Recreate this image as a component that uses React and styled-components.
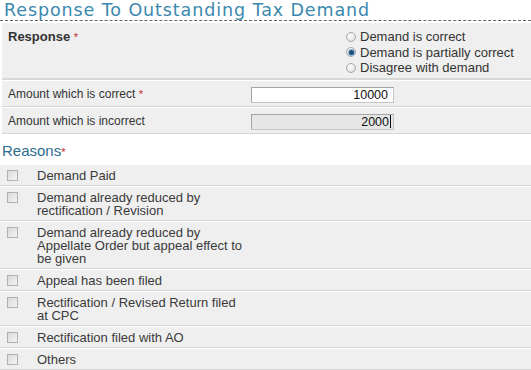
import React from "react";
import styled, { createGlobalStyle } from "styled-components";

const Global = createGlobalStyle`
  html, body { margin: 0; padding: 0; background: #fff; }
  body { font-family: "Liberation Sans", Arial, sans-serif; font-size: 13px; color: #333; }
  * { box-sizing: border-box; }
`;

const Page = styled.div`
  width: 531px;
  height: 370px;
  overflow: hidden;
`;

const Title = styled.h1`
  margin: 0;
  padding: 1px 0 0 4px;
  height: 21px;
  font-family: "DejaVu Sans", sans-serif;
  font-weight: normal;
  font-size: 17.5px;
  line-height: 19px;
  color: #3b88ad;
  letter-spacing: 0.9px;
  border-bottom: 1px dashed #666;
  white-space: nowrap;
`;

const ResponseBox = styled.div`
  margin: 2px 0 0 2px;
  height: 57px;
  background: #efefef;
  border-bottom: 2px solid #d8d8d8;
  display: grid;
  grid-template-columns: 344px 1fr;
`;

const FieldLabel = styled.div`
  padding: ${(p) => p.$pad || "7px 0 0 6px"};
  font-weight: ${(p) => (p.$bold ? "bold" : "normal")};
  font-size: ${(p) => (p.$bold ? "13px" : "12px")};
  color: #333;
`;

const Star = styled.span`
  color: #c0282e;
  font-weight: normal;
  font-size: 11px;
`;

const Options = styled.div`
  padding-top: 6px;
  display: flex;
  flex-direction: column;
`;

const Option = styled.label`
  display: flex;
  align-items: center;
  gap: 4px;
  height: 15.5px;
  font-size: 13px;
  color: #333;
`;

const Radio = styled.span`
  width: 10px;
  height: 10px;
  border-radius: 50%;
  border: 1px solid #a8a8a8;
  background: radial-gradient(circle at 40% 35%, #ffffff 0%, #e4e4e4 70%, #cfcfcf 100%);
  display: inline-flex;
  align-items: center;
  justify-content: center;
  flex: none;
  &::after {
    content: "";
    width: 5px;
    height: 5px;
    border-radius: 50%;
    background: ${(p) => (p.$on ? "#1d4f78" : "transparent")};
    box-shadow: ${(p) => (p.$on ? "0 0 0 1px #8fb8d8" : "none")};
  }
`;

const AmountRow = styled.div`
  margin: 1px 0 0 2px;
  height: 26px;
  background: #efefef;
  border-bottom: 1px solid #d6d6d6;
  display: grid;
  grid-template-columns: 249px 143px;
  align-items: center;
`;

const Amount = styled.div`
  height: 16px;
  margin-top: 2px;
  border: 1px solid #a5a5a5;
  border-right-color: #c4c4c4;
  border-bottom-color: #c4c4c4;
  background: ${(p) => (p.$disabled ? "#e6e6e6" : "#fff")};
  font-size: 12.5px;
  line-height: 14px;
  text-align: right;
  padding-right: ${(p) => (p.$caret ? "2px" : "5px")};
  color: #111;
`;

const Caret = styled.span`
  display: inline-block;
  width: 1px;
  height: 13px;
  background: #000;
  vertical-align: -2px;
  margin-left: 1px;
`;

const SectionHead = styled.div`
  margin: 8px 0 0 2px;
  height: 23px;
  font-size: 15px;
  color: #2b6d8e;
`;

const List = styled.div``;

const Reason = styled.label`
  display: flex;
  align-items: flex-start;
  background: #efefef;
  border-bottom: 1px solid #d6d6d6;
  margin-bottom: 1px;
  padding: 4px 0 3px 7px;
  line-height: 13px;
  font-size: 13px;
  color: #3a3a3a;
`;

const Box = styled.span`
  flex: none;
  width: 11px;
  height: 11px;
  margin-top: 1px;
  border: 1px solid #b0b0b0;
  background: linear-gradient(135deg, #d9d9d9, #f4f4f4);
`;

const ReasonText = styled.span`
  margin-left: 19px;
  width: 210px;
`;

const reasons = [
  "Demand Paid",
  "Demand already reduced by rectification / Revision",
  "Demand already reduced by Appellate Order but appeal effect to be given",
  "Appeal has been filed",
  "Rectification / Revised Return filed at CPC",
  "Rectification filed with AO",
  "Others",
];

export default function App() {
  return (
    <Page>
      <Global />
      <Title>Response To Outstanding Tax Demand</Title>
      <ResponseBox>
        <FieldLabel $bold $pad="6px 0 0 6px">
          Response <Star>*</Star>
        </FieldLabel>
        <Options>
          <Option><Radio />Demand is correct</Option>
          <Option><Radio $on />Demand is partially correct</Option>
          <Option><Radio />Disagree with demand</Option>
        </Options>
      </ResponseBox>
      <AmountRow>
        <FieldLabel $pad="0 0 0 6px">
          Amount which is correct <Star>*</Star>
        </FieldLabel>
        <Amount>10000</Amount>
      </AmountRow>
      <AmountRow>
        <FieldLabel $pad="0 0 0 6px">Amount which is incorrect</FieldLabel>
        <Amount $disabled $caret>
          2000<Caret />
        </Amount>
      </AmountRow>
      <SectionHead>
        Reasons<Star>*</Star>
      </SectionHead>
      <List>
        {reasons.map((r) => (
          <Reason key={r}>
            <Box />
            <ReasonText>{r}</ReasonText>
          </Reason>
        ))}
      </List>
    </Page>
  );
}
